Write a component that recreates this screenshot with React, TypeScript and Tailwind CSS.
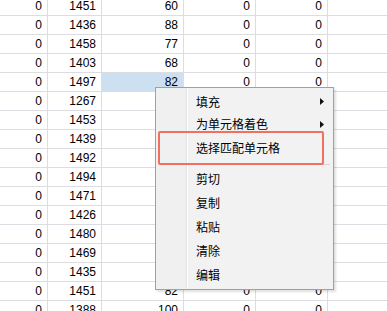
import React from 'react';

const rows: (string | number)[][] = [
  [0, 1451, 60, 0, 0],
  [0, 1436, 88, 0, 0],
  [0, 1458, 77, 0, 0],
  [0, 1403, 68, 0, 0],
  [0, 1497, 82, 0, 0],
  [0, 1267, 71, 0, 0],
  [0, 1453, 90, 0, 0],
  [0, 1439, 64, 0, 0],
  [0, 1492, 85, 0, 0],
  [0, 1494, 79, 0, 0],
  [0, 1471, 66, 0, 0],
  [0, 1426, 93, 0, 0],
  [0, 1480, 74, 0, 0],
  [0, 1469, 81, 0, 0],
  [0, 1435, 70, 0, 0],
  [0, 1451, 82, 0, 0],
  [0, 1388, 100, 0, 0],
];

const colWidths = ['w-[48px]', 'w-[54px]', 'w-[82px]', 'w-[72px]', 'w-[72px]'];

const Arrow = () => (
  <svg width="4" height="7" viewBox="0 0 4 7" className="ml-auto mr-[9px]">
    <path d="M0 0 L4 3.5 L0 7 Z" fill="#111" />
  </svg>
);

const MenuItem: React.FC<{ label: string; sub?: boolean; h?: string }> = ({ label, sub, h = 'h-[24px]' }) => (
  <div className={`flex ${h} items-center pl-[8px] text-[12px] text-black`}>
    <span>{label}</span>
    {sub && <Arrow />}
  </div>
);

export default function App() {
  return (
    <div
      className="relative h-[311px] w-[387px] overflow-hidden bg-white"
      style={{ fontFamily: '"Liberation Sans", "Noto Sans CJK SC", sans-serif' }}
    >
      {/* grid */}
      <div className="-mt-[3px] flex flex-col">
        {rows.map((r, i) => (
          <div key={i} className="flex h-[19px] border-b border-[#dcdce2]">
            {r.map((v, j) => (
              <div
                key={j}
                className={`${colWidths[j]} flex shrink-0 items-center justify-end border-r border-[#dcdce2] pr-[5px] text-[12px] text-black ${
                  i === 4 && j === 2 ? 'bg-[#cce0f1]' : ''
                }`}
              >
                {v}
              </div>
            ))}
            <div className="flex-1" />
          </div>
        ))}
      </div>

      {/* context menu */}
      <div
        className="absolute left-[155px] top-[87px] flex h-[203px] w-[179px] border border-[#a0a0a0] bg-[#f2f2f2] shadow-[2px_2px_2px_rgba(0,0,0,0.12)]"
        style={{ fontFamily: '"Noto Sans CJK SC", sans-serif' }}
      >
        <div className="w-[30px] shrink-0 bg-[#f0f0f0]" />
        <div className="w-[1px] shrink-0 bg-[#e2e2e2]" />
        <div className="w-[1px] shrink-0 bg-white" />
        <div className="flex flex-1 flex-col pt-[2px]">
          <MenuItem label="填充" sub h="h-[23px]" />
          <MenuItem label="为单元格着色" sub h="h-[22px]" />
          <MenuItem label="选择匹配单元格" h="h-[26px]" />
          <div className="flex h-[6px] items-center pr-[3px]">
            <div className="h-[1px] w-full bg-[#d8d8d8]" />
          </div>
          <MenuItem label="剪切" />
          <MenuItem label="复制" />
          <MenuItem label="粘贴" />
          <MenuItem label="清除" />
          <MenuItem label="编辑" />
        </div>
      </div>

      {/* highlight annotation */}
      <div className="absolute left-[158px] top-[131px] h-[34px] w-[166px] rounded-[2px] border-2 border-[#f2705f]" />
    </div>
  );
}
